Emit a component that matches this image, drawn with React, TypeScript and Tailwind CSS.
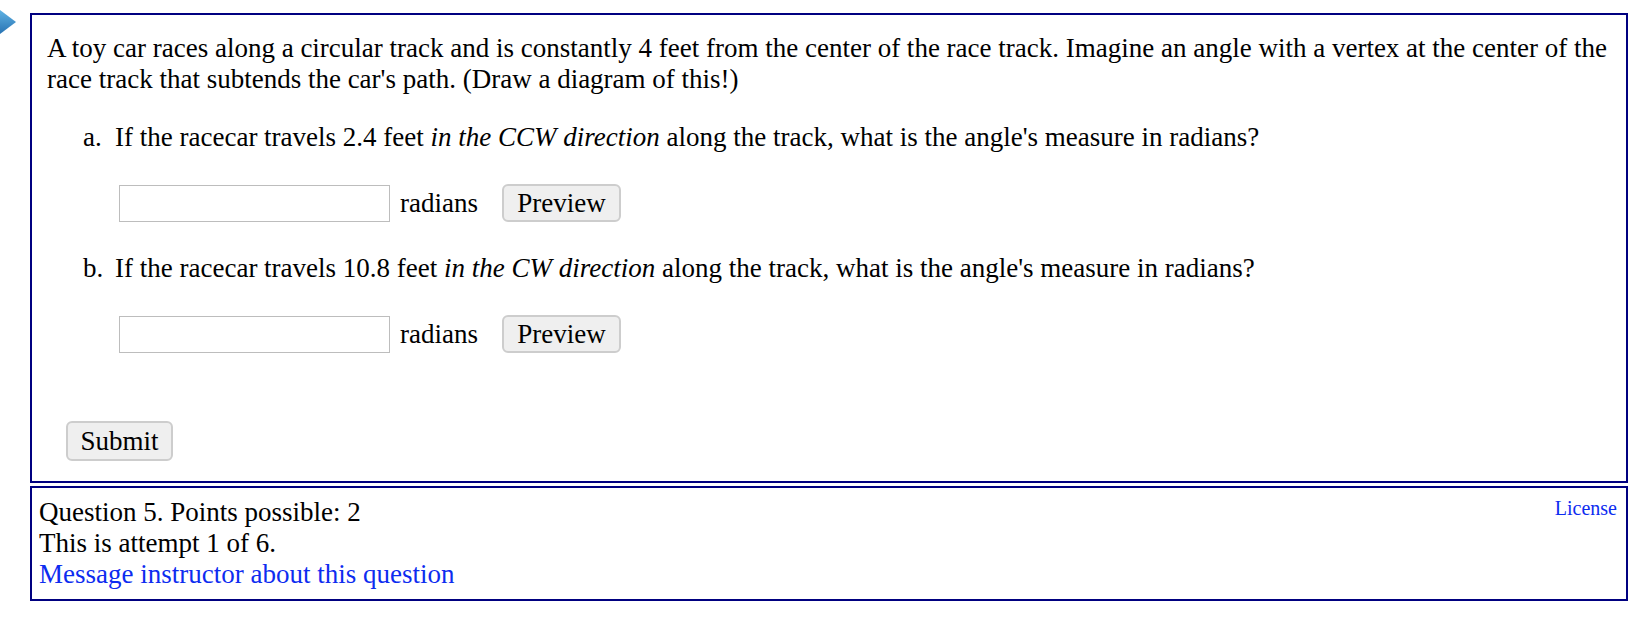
import React from "react";

function AnswerRow() {
  return (
    <div className="mt-[31px] ml-[72px] flex h-[38px] items-center">
      <input
        type="text"
        className="h-[37px] w-[271px] border border-[#bdbdbd] bg-white px-2 text-[26px] outline-none"
      />
      <span className="ml-[10px]">radians</span>
      <button className="ml-[24px] h-[38px] w-[119px] rounded-[6px] border-2 border-[#cdcdcd] bg-[#efefef] text-[27px] leading-none">
        Preview
      </button>
    </div>
  );
}

export default function App() {
  return (
    <div className="relative min-h-[622px] bg-white pt-[13px] font-['Liberation_Serif','Times_New_Roman',serif] text-black">
      {/* question marker */}
      <svg className="absolute left-0 top-[10px]" width="16" height="24" viewBox="0 0 16 24">
        <defs>
          <linearGradient id="mk" x1="0" y1="0" x2="0" y2="1">
            <stop offset="0" stopColor="#5fb2e3" />
            <stop offset="1" stopColor="#2873b3" />
          </linearGradient>
        </defs>
        <polygon points="0,0 16,12 0,24" fill="url(#mk)" />
      </svg>

      <div className="ml-[30px] mr-[14px] border-2 border-[#000080] pl-[15px] pr-[8px] pt-[18px] pb-[20px] text-[27px] leading-[31px]">
        <p className="mb-[27px]">
          A toy car races along a circular track and is constantly 4 feet from the center of the race track. Imagine an
          angle with a vertex at the center of the race track that subtends the car's path. (Draw a diagram of this!)
        </p>

        <div className="flex">
          <span className="ml-[36px] w-[32px]">a.</span>
          <span>
            If the racecar travels 2.4 feet <i>in the CCW direction</i> along the track, what is the angle's measure in
            radians?
          </span>
        </div>
        <AnswerRow />

        <div className="mt-[31px] flex">
          <span className="ml-[36px] w-[32px]">b.</span>
          <span>
            If the racecar travels 10.8 feet <i>in the CW direction</i> along the track, what is the angle's measure in
            radians?
          </span>
        </div>
        <AnswerRow />

        <button className="ml-[19px] mt-[68px] h-[40px] w-[107px] rounded-[6px] border-2 border-[#cdcdcd] bg-[#efefef] text-[27px] leading-none">
          Submit
        </button>
      </div>

      <div className="ml-[30px] mr-[14px] mt-[3px] flex border-2 border-[#000080] pl-[7px] pr-[9px] pt-[9px] pb-[9px]">
        <div className="flex-1 text-[27px] leading-[31px]">
          <div>Question 5. Points possible: 2</div>
          <div>This is attempt 1 of 6.</div>
          <a href="#" className="text-[#0d2cf0]">
            Message instructor about this question
          </a>
        </div>
        <a href="#" className="text-[20px] leading-[23px] text-[#0d2cf0]">
          License
        </a>
      </div>
    </div>
  );
}
